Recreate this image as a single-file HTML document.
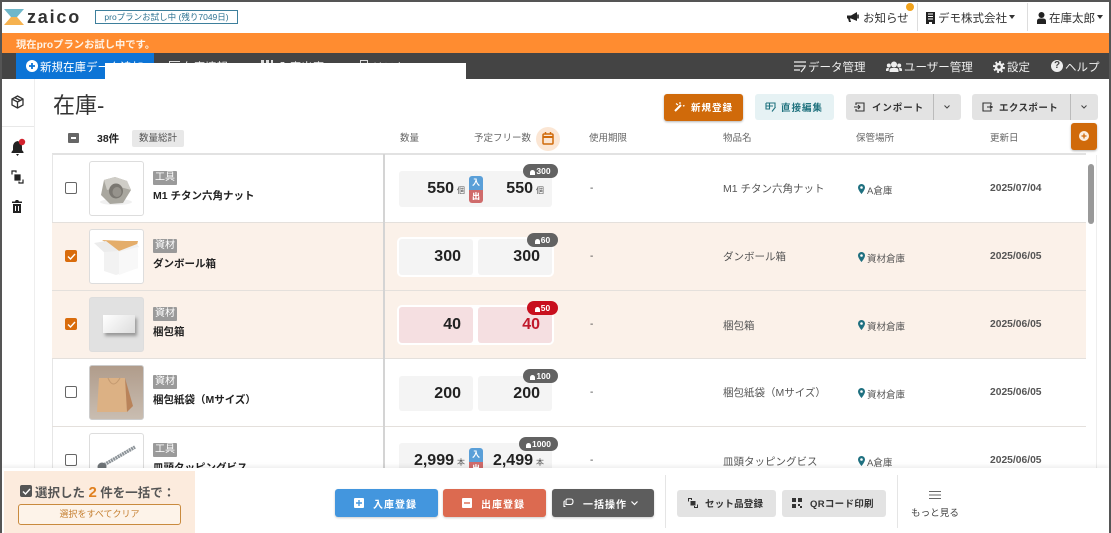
<!DOCTYPE html>
<html lang="ja"><head><meta charset="utf-8">
<style>
*{box-sizing:border-box;margin:0;padding:0}
html,body{width:1111px;height:533px;overflow:hidden;background:#fff}
body{font-family:"Liberation Sans","Noto Sans CJK JP",sans-serif;color:#222;position:relative}
.a{position:absolute;white-space:nowrap}
svg.a{display:block}
.row{position:absolute;left:52px;width:1034px;height:68px;border-bottom:1px solid #e4e0dc}
.sel{background:#fbf1e9}
.cb{position:absolute;left:65px;width:12px;height:12px;border:1.5px solid #666;border-radius:2px;background:#fff}
.cb.on{background:#d96c0c;border:0}
.thumb{position:absolute;left:89px;width:55px;height:55px;border:1px solid #ddd;border-radius:3px;background:#fff;overflow:hidden}
.tag{position:absolute;left:153px;width:24px;height:14px;background:#9a9a9a;color:#fff;font-size:10px;line-height:14px;text-align:center;border-radius:1px}
.nm{position:absolute;left:153px;font-size:10.500px;font-weight:bold;white-space:nowrap;color:#222}
.qbox{position:absolute;width:74px;height:36px;background:#f4f4f4;border-radius:3px}
.wrap{position:absolute;left:397px;width:157px;height:40px;background:#fff;border-radius:5px}
.num{position:absolute;font-size:16px;font-weight:bold;text-align:right;white-space:nowrap;color:#222}
.u{font-size:8px;font-weight:normal;color:#555;margin-left:3px}
.pill{position:absolute;height:14px;background:#626262;color:#fff;font-size:8.500px;font-weight:bold;line-height:14px;text-align:center;border-radius:7px}
.pill s{display:inline-block;width:5px;height:5px;background:#fff;border-radius:3px 3px 0 0;margin-right:1px;vertical-align:-0.500px}
.io{position:absolute;left:469px;width:14px;height:27px;border-radius:3px;overflow:hidden;font-size:8px;line-height:13.500px;text-align:center;color:#fff;font-weight:bold}
.io i{display:block;height:13.500px;font-style:normal;background:#5a9fd8}
.io b{display:block;height:13.500px;background:#cf6b6b}
.dash{position:absolute;left:590px;font-size:10px;color:#444}
.pn{position:absolute;left:723px;font-size:10.500px;color:#555;white-space:nowrap}
.loc{position:absolute;left:867px;font-size:9.500px;color:#555;white-space:nowrap}
.date{position:absolute;left:990px;font-size:10.300px;font-weight:bold;color:#555;white-space:nowrap}
.th{position:absolute;top:130px;font-size:9.500px;color:#666;white-space:nowrap}
.b{position:absolute;border-radius:3px}
.t{position:absolute;font-size:10px;font-weight:bold;white-space:nowrap;letter-spacing:1px}
.nav{position:absolute;top:59px;color:#eee;font-size:11.500px;white-space:nowrap}
.top{position:absolute;top:10px;font-size:11.500px;color:#333;white-space:nowrap}
</style></head><body>

<!-- header -->
<svg class="a" style="left:4px;top:9px" width="20" height="16" viewBox="0 0 20 16"><path d="M0 0H20L13 8H7Z" fill="#6fb7c9"/><path d="M7 8H13L20 16H0Z" fill="#f6b24f"/></svg>
<div class="a" style="left:27px;top:5px;font-size:18px;font-weight:bold;letter-spacing:1.800px;color:#333;line-height:24px">zaico</div>
<div class="a" style="left:95px;top:10px;width:143px;height:14px;border:1px solid #3d7f9c;font-size:8.500px;line-height:12px;text-align:center;color:#2e7392">proプランお試し中 (残り7049日)</div>

<svg class="a" style="left:847px;top:12px" width="13" height="11" viewBox="0 0 13 11"><path d="M0 3.500H4L10 0V9L4 6.500H3L4 10H2L1 6.500H0Z" fill="#222"/><path d="M11 2.500V6.500" stroke="#222" stroke-width="1.600"/></svg>
<div class="top" style="left:863px">お知らせ</div>
<div class="a" style="left:906px;top:3px;width:8px;height:8px;border-radius:50%;background:#f2a31c"></div>
<div class="a" style="left:917px;top:3px;width:1px;height:28px;background:#ddd"></div>
<svg class="a" style="left:926px;top:12px" width="9" height="12" viewBox="0 0 9 12"><path d="M0 0H9V12H6V10H3V12H0Z" fill="#222"/><path d="M2 2H7M2 4.500H7M2 7H7" stroke="#fff" stroke-width="1"/></svg>
<div class="top" style="left:938px">デモ株式会社</div>
<div class="a" style="left:1009px;top:15px;border:3.500px solid transparent;border-top:4px solid #333"></div>
<div class="a" style="left:1027px;top:3px;width:1px;height:28px;background:#ddd"></div>
<svg class="a" style="left:1037px;top:12px" width="9" height="12" viewBox="0 0 9 12"><circle cx="4.500" cy="3" r="3" fill="#222"/><path d="M0 12V9Q0 6.500 3 6.500H6Q9 6.500 9 9V12Z" fill="#222"/></svg>
<div class="top" style="left:1049px">在庫太郎</div>
<div class="a" style="left:1097px;top:15px;border:3.500px solid transparent;border-top:4px solid #333"></div>

<!-- orange bar -->
<div class="a" style="left:2px;top:33px;width:1107px;height:20px;background:#ff8c30"></div>
<div class="a" style="left:16px;top:36px;font-size:10.300px;font-weight:bold;color:#fff3e6">現在proプランお試し中です。</div>

<!-- nav -->
<div class="a" style="left:2px;top:53px;width:1107px;height:26px;background:#444"></div>
<div class="a" style="left:16px;top:53px;width:138px;height:26px;background:#0c74d6"></div>
<svg class="a" style="left:26px;top:60px" width="12" height="12" viewBox="0 0 12 12"><circle cx="6" cy="6" r="6" fill="#fff"/><path d="M6 3V9M3 6H9" stroke="#0c74d6" stroke-width="1.800"/></svg>
<div class="nav" style="left:40px;color:#fff">新規在庫データ追加</div>
<div class="a" style="left:169px;top:61px;width:11px;height:8px;border:1px solid #ddd;border-right:0"></div>
<div class="nav" style="left:182px">在庫情報</div>
<svg class="a" style="left:260px;top:60px" width="14" height="10" viewBox="0 0 14 10" fill="#ddd"><path d="M1 0H4V10H1ZM6 0H9V10H6ZM11 0H13V10H11Z"/></svg>
<div class="nav" style="left:278px">入庫出庫</div>
<div class="a" style="left:360px;top:60px;width:8px;height:9px;border:1.500px solid #ddd"></div>
<div class="nav" style="left:372px">リスト</div>
<div class="a" style="left:105px;top:63px;width:361px;height:17px;background:#fff"></div>

<svg class="a" style="left:794px;top:60px" width="12" height="13" viewBox="0 0 12 13" fill="none" stroke="#eee" stroke-width="1.200"><path d="M0 2H12M0 6H12M0 10H6M11 7L7 12"/></svg>
<div class="nav" style="left:808px">データ管理</div>
<svg class="a" style="left:886px;top:61px" width="16" height="12" viewBox="0 0 16 12" fill="#eee"><circle cx="8" cy="3.500" r="3"/><circle cx="2.800" cy="4.500" r="2"/><circle cx="13.200" cy="4.500" r="2"/><path d="M3.500 11V9.500Q3.500 7 6 7H10Q12.500 7 12.500 9.500V11ZM0 10V8.500Q0 7 2 7H3L2.500 10ZM16 10V8.500Q16 7 14 7H13L13.500 10Z"/></svg>
<div class="nav" style="left:904px">ユーザー管理</div>
<svg class="a" style="left:993px;top:61px" width="12" height="12" viewBox="0 0 12 12"><circle cx="6" cy="6" r="4.200" fill="#eee"/><circle cx="6" cy="6" r="5" fill="none" stroke="#eee" stroke-width="2" stroke-dasharray="2 1.900"/><circle cx="6" cy="6" r="1.700" fill="#444"/></svg>
<div class="nav" style="left:1007px">設定</div>
<div class="a" style="left:1051px;top:60px;width:12px;height:12px;border-radius:50%;background:#eee;color:#444;font-size:10px;line-height:12px;text-align:center;font-weight:bold">?</div>
<div class="nav" style="left:1065px">ヘルプ</div>

<!-- sidebar -->
<div class="a" style="left:34px;top:79px;width:1px;height:400px;background:#eee"></div>
<div class="a" style="left:2px;top:126px;width:32px;height:1px;background:#e8e8e8"></div>
<svg class="a" style="left:11px;top:95px" width="13" height="14" viewBox="0 0 13 14" fill="none" stroke="#333" stroke-width="1.300"><path d="M6.500 1L12 4V10L6.500 13L1 10V4ZM1 4L6.500 7L12 4M6.500 7V13M3.500 2.500L9.500 5.500"/></svg>
<svg class="a" style="left:11px;top:138px" width="15" height="18" viewBox="0 0 15 18"><path d="M6.500 3Q2 4 2 9V12L0.500 14V15H12.500V14L11 12V9Q11 4 6.500 3ZM5 16H8L6.500 18Z" fill="#222"/><circle cx="11" cy="4" r="3.200" fill="#d3232e"/></svg>
<svg class="a" style="left:11px;top:170px" width="13" height="14" viewBox="0 0 13 14" fill="none" stroke="#222" stroke-width="1.200"><path d="M1 4.500V1H5V2.500M12 9.500V13H8V11.500"/><path d="M4 5H9V10H4Z" fill="#222"/></svg>
<svg class="a" style="left:12px;top:200px" width="10" height="13" viewBox="0 0 10 13" fill="#222"><path d="M0 1.500H3L3.800 0H6.200L7 1.500H10V3H0ZM1 4H9V13H1Z"/><path d="M3.500 6V11M6.500 6V11" stroke="#fff" stroke-width="1"/></svg>

<!-- page head -->
<div class="a" style="left:53px;top:92px;font-size:22px;color:#333;line-height:28px">在庫-</div>

<div class="b" style="left:664px;top:94px;width:79px;height:27px;background:#d06a0a;box-shadow:0 1px 2px rgba(0,0,0,.3)"></div>
<svg class="a" style="left:674px;top:101px" width="11" height="11" viewBox="0 0 11 11" fill="none" stroke="#fff"><path d="M1 10L7 4" stroke-width="2"/><path d="M2 2.500L4 4M6 1V3M9 5L10.500 4.500" stroke-width="1.200"/></svg>
<div class="t" style="left:691px;top:100px;color:#fff;font-size:9.500px">新規登録</div>

<div class="b" style="left:755px;top:94px;width:79px;height:26px;background:#e6f2f4"></div>
<svg class="a" style="left:765px;top:102px" width="11" height="10" viewBox="0 0 11 10" fill="none" stroke="#21737f" stroke-width="1.100"><path d="M1 1H10V5M1 1V7H5M1 4H8M4.500 1V7M10.500 5L7 9.500"/></svg>
<div class="t" style="left:781px;top:100px;color:#21737f;font-size:9.500px">直接編集</div>

<div class="b" style="left:846px;top:94px;width:115px;height:26px;background:#e3e3e3"></div>
<svg class="a" style="left:854px;top:102px" width="11" height="10" viewBox="0 0 11 10" fill="none" stroke="#333" stroke-width="1.100"><path d="M2 3V1H10V9H2V7M0 5H6M4 3L6 5L4 7"/></svg>
<div class="t" style="left:872px;top:100px;color:#333;font-size:9.500px;letter-spacing:.9px">インポート</div>
<div class="a" style="left:933px;top:94px;width:1px;height:26px;background:#bbb"></div>
<svg class="a" style="left:944px;top:105px" width="6" height="4" viewBox="0 0 6 4" fill="none" stroke="#444" stroke-width="1"><path d="M0.500 0.500L3 3L5.500 0.500"/></svg>

<div class="b" style="left:972px;top:94px;width:126px;height:26px;background:#e3e3e3"></div>
<svg class="a" style="left:982px;top:102px" width="11" height="10" viewBox="0 0 11 10" fill="none" stroke="#333" stroke-width="1.100"><path d="M9 3V1H1V9H9V7M5 5H11M8 3.500L10 5L8 6.500"/></svg>
<div class="t" style="left:999px;top:100px;color:#333;font-size:9.500px;letter-spacing:.4px">エクスポート</div>
<div class="a" style="left:1070px;top:94px;width:1px;height:26px;background:#bbb"></div>
<svg class="a" style="left:1081px;top:105px" width="6" height="4" viewBox="0 0 6 4" fill="none" stroke="#444" stroke-width="1"><path d="M0.500 0.500L3 3L5.500 0.500"/></svg>

<!-- table head -->
<div class="a" style="left:68px;top:133px;width:11px;height:10px;background:#666;border-radius:1px"></div>
<div class="a" style="left:71px;top:137px;width:5px;height:2px;background:#fff"></div>
<div class="a" style="left:97px;top:131px;font-size:10.500px;font-weight:bold;color:#222">38件</div>
<div class="a" style="left:132px;top:130px;width:52px;height:17px;background:#e8e8e8;border-radius:2px;font-size:9.500px;line-height:17px;text-align:center;color:#555">数量総計</div>
<div class="th" style="left:400px">数量</div>
<div class="th" style="left:474px">予定フリー数</div>
<div class="a" style="left:536px;top:127px;width:24px;height:24px;border-radius:50%;background:#fbe6d4"></div>
<svg class="a" style="left:542px;top:132px" width="12" height="13" viewBox="0 0 12 13" fill="none" stroke="#d06a0a" stroke-width="1.500"><rect x="1" y="2" width="10" height="10" rx="1"/><path d="M1 5H11" stroke-width="2"/><path d="M3.500 0V2M8.500 0V2"/></svg>
<div class="th" style="left:589px">使用期限</div>
<div class="th" style="left:723px">物品名</div>
<div class="th" style="left:856px">保管場所</div>
<div class="th" style="left:990px">更新日</div>
<div class="a" style="left:1071px;top:123px;width:26px;height:27px;background:#d06a0a;border-radius:3px;box-shadow:0 1px 2px rgba(0,0,0,.3)"></div>
<svg class="a" style="left:1079px;top:131px" width="10" height="10" viewBox="0 0 10 10"><circle cx="5" cy="5" r="5" fill="#fbeee0"/><path d="M5 2.500V7.500M2.500 5H7.500" stroke="#d06a0a" stroke-width="1.300"/></svg>

<!-- rows -->
<div class="a" style="left:52px;top:153px;width:1034px;height:2px;background:#e2e2e2"></div>
<div class="a" style="left:52px;top:154px;width:1px;height:320px;background:#e6e6e6"></div>
<div class="row" style="top:155px"></div>
<div class="row sel" style="top:223px"></div>
<div class="row sel" style="top:291px"></div>
<div class="row" style="top:359px"></div>
<div class="a" style="left:383px;top:154px;width:2px;height:320px;background:#d4d4d4"></div>

<!-- row 1 -->
<div class="cb" style="top:182px"></div>
<div class="thumb" style="top:161px"><svg width="53" height="53" viewBox="0 0 53 53"><ellipse cx="26" cy="40" rx="16" ry="3" fill="#f0f0f0"/><path d="M14 18L25 15L37 19L41 28L33 41L20 42L11 33Z" fill="#a9a79f"/><path d="M14 18L25 15L37 19L41 28L30 25L17 28Z" fill="#cfcdc7"/><ellipse cx="26" cy="29" rx="7" ry="7.500" fill="#7b7872"/><ellipse cx="27" cy="30" rx="4.500" ry="5" fill="#96938c"/></svg></div>
<div class="tag" style="top:171px">工具</div>
<div class="nm" style="top:188px">M1 チタン六角ナット</div>
<div class="a" style="left:399px;top:171px;width:153px;height:36px;background:#f4f4f4;border-radius:3px"></div>
<div class="num" style="left:401px;top:180px;width:64px">550<span class="u">個</span></div>
<div class="num" style="left:478px;top:180px;width:66px">550<span class="u">個</span></div>
<div class="io" style="top:176px"><i>入</i><b>出</b></div>
<div class="pill" style="left:523px;top:164px;width:35px"><s></s>300</div>
<div class="dash" style="top:183px">-</div>
<div class="pn" style="top:181px">M1 チタン六角ナット</div>
<svg class="a" style="left:858px;top:184px" width="7" height="10" viewBox="0 0 7 10"><path d="M3.500 0A3.500 3.500 0 0 1 7 3.500C7 6 3.500 10 3.500 10S0 6 0 3.500A3.500 3.500 0 0 1 3.500 0Z" fill="#1f7080"/><circle cx="3.500" cy="3.500" r="1.300" fill="#fff"/></svg>
<div class="loc" style="top:183px">A倉庫</div>
<div class="date" style="top:183px">2025/07/04</div>

<!-- row 2 -->
<div class="cb on" style="top:250px"></div>
<svg class="a" style="left:67px;top:253px" width="9" height="7" viewBox="0 0 9 7" fill="none" stroke="#fff" stroke-width="1.400"><path d="M1 3.500L3.500 6L8 1"/></svg>
<div class="thumb" style="top:229px"><svg width="53" height="53" viewBox="0 0 53 53"><path d="M12 10L36 11L48 11L47 15L37 19L29 21Z" fill="#e4ad6a"/><path d="M4 13L16 11L29 21L17 25Z" fill="#ececec"/><path d="M29 21L47 14L49 17L36 24Z" fill="#f0f0f0"/><path d="M14 22L29 21L48 17V38L26 45L14 41Z" fill="#f2f2f2"/><path d="M29 22L48 17V38L29 45Z" fill="#f8f8f8"/></svg></div>
<div class="tag" style="top:239px">資材</div>
<div class="nm" style="top:256px">ダンボール箱</div>
<div class="wrap" style="top:237px"></div>
<div class="qbox" style="left:399px;top:239px"></div><div class="qbox" style="left:478px;top:239px"></div>
<div class="num" style="left:399px;top:248px;width:62px">300</div>
<div class="num" style="left:478px;top:248px;width:62px">300</div>
<div class="pill" style="left:527px;top:233px;width:31px"><s></s>60</div>
<div class="dash" style="top:251px">-</div>
<div class="pn" style="top:249px">ダンボール箱</div>
<svg class="a" style="left:858px;top:252px" width="7" height="10" viewBox="0 0 7 10"><path d="M3.500 0A3.500 3.500 0 0 1 7 3.500C7 6 3.500 10 3.500 10S0 6 0 3.500A3.500 3.500 0 0 1 3.500 0Z" fill="#1f7080"/><circle cx="3.500" cy="3.500" r="1.300" fill="#fff"/></svg>
<div class="loc" style="top:251px">資材倉庫</div>
<div class="date" style="top:251px">2025/06/05</div>

<!-- row 3 -->
<div class="cb on" style="top:318px"></div>
<svg class="a" style="left:67px;top:321px" width="9" height="7" viewBox="0 0 9 7" fill="none" stroke="#fff" stroke-width="1.400"><path d="M1 3.500L3.500 6L8 1"/></svg>
<div class="thumb" style="top:297px;background:#e1e1e1"><div class="a" style="left:13px;top:17px;width:32px;height:18px;background:linear-gradient(135deg,#fff,#ddd);box-shadow:2px 3px 3px #999"></div></div>
<div class="tag" style="top:307px">資材</div>
<div class="nm" style="top:324px">梱包箱</div>
<div class="wrap" style="top:305px"></div>
<div class="qbox" style="left:399px;top:307px;background:#f5dfe1"></div><div class="qbox" style="left:478px;top:307px;background:#f5dfe1"></div>
<div class="num" style="left:399px;top:316px;width:62px">40</div>
<div class="num" style="left:478px;top:316px;width:62px;color:#c0192c">40</div>
<div class="pill" style="left:527px;top:301px;width:31px;background:#c80f1e"><s></s>50</div>
<div class="dash" style="top:319px">-</div>
<div class="pn" style="top:318px">梱包箱</div>
<svg class="a" style="left:858px;top:320px" width="7" height="10" viewBox="0 0 7 10"><path d="M3.500 0A3.500 3.500 0 0 1 7 3.500C7 6 3.500 10 3.500 10S0 6 0 3.500A3.500 3.500 0 0 1 3.500 0Z" fill="#1f7080"/><circle cx="3.500" cy="3.500" r="1.300" fill="#fff"/></svg>
<div class="loc" style="top:319px">資材倉庫</div>
<div class="date" style="top:319px">2025/06/05</div>

<!-- row 4 -->
<div class="cb" style="top:386px"></div>
<div class="thumb" style="top:365px;background:linear-gradient(#b09c8b,#c9bdb1);border-color:#ccc"><svg width="53" height="53" viewBox="0 0 53 53"><path d="M9 12H35L37 46H7Z" fill="#dcb184"/><path d="M35 12L43 40L37 46Z" fill="#b9835a"/><path d="M18 12Q23 24 30 12" fill="none" stroke="#c49a70" stroke-width="1"/></svg></div>
<div class="tag" style="top:375px">資材</div>
<div class="nm" style="top:392px">梱包紙袋（Mサイズ）</div>
<div class="qbox" style="left:399px;top:376px;height:35px"></div><div class="qbox" style="left:478px;top:376px;height:35px"></div>
<div class="num" style="left:399px;top:385px;width:62px">200</div>
<div class="num" style="left:478px;top:385px;width:62px">200</div>
<div class="pill" style="left:523px;top:369px;width:35px"><s></s>100</div>
<div class="dash" style="top:387px">-</div>
<div class="pn" style="top:385px">梱包紙袋（Mサイズ）</div>
<svg class="a" style="left:858px;top:388px" width="7" height="10" viewBox="0 0 7 10"><path d="M3.500 0A3.500 3.500 0 0 1 7 3.500C7 6 3.500 10 3.500 10S0 6 0 3.500A3.500 3.500 0 0 1 3.500 0Z" fill="#1f7080"/><circle cx="3.500" cy="3.500" r="1.300" fill="#fff"/></svg>
<div class="loc" style="top:387px">資材倉庫</div>
<div class="date" style="top:387px">2025/06/05</div>

<!-- row 5 -->
<div class="cb" style="top:454px"></div>
<div class="thumb" style="top:433px"><svg width="53" height="53" viewBox="0 0 53 53"><path d="M12 32L45 13" stroke="#8d9499" stroke-width="3.500" stroke-dasharray="2 .6"/><circle cx="12" cy="33" r="4.500" fill="#6f7478"/></svg></div>
<div class="tag" style="top:443px">工具</div>
<div class="nm" style="top:460px">皿頭タッピングビス</div>
<div class="a" style="left:399px;top:443px;width:153px;height:36px;background:#f4f4f4;border-radius:3px"></div>
<div class="num" style="left:401px;top:452px;width:64px">2,999<span class="u">本</span></div>
<div class="num" style="left:478px;top:452px;width:66px">2,499<span class="u">本</span></div>
<div class="io" style="top:448px"><i>入</i><b>出</b></div>
<div class="pill" style="left:519px;top:437px;width:39px"><s></s>1000</div>
<div class="dash" style="top:455px">-</div>
<div class="pn" style="top:454px">皿頭タッピングビス</div>
<svg class="a" style="left:858px;top:456px" width="7" height="10" viewBox="0 0 7 10"><path d="M3.500 0A3.500 3.500 0 0 1 7 3.500C7 6 3.500 10 3.500 10S0 6 0 3.500A3.500 3.500 0 0 1 3.500 0Z" fill="#1f7080"/><circle cx="3.500" cy="3.500" r="1.300" fill="#fff"/></svg>
<div class="loc" style="top:455px">A倉庫</div>
<div class="date" style="top:455px">2025/06/05</div>

<!-- scrollbar -->
<div class="a" style="left:1087px;top:155px;width:10px;height:315px;background:#fff;border-right:1px solid #eee"></div>
<div class="a" style="left:1088px;top:164px;width:6px;height:60px;background:#999;border-radius:3px"></div>

<!-- footer -->
<div class="a" style="left:2px;top:468px;width:1107px;height:65px;background:#fff;box-shadow:0 -2px 4px rgba(0,0,0,.07)"></div>
<div class="a" style="left:4px;top:471px;width:191px;height:62px;background:#fcebdd"></div>
<div class="a" style="left:20px;top:485px;width:12px;height:12px;background:#555;border-radius:2px"></div>
<svg class="a" style="left:22px;top:488px" width="9" height="7" viewBox="0 0 9 7" fill="none" stroke="#fff" stroke-width="1.400"><path d="M1 3.500L3.500 6L8 1"/></svg>
<div class="a" style="left:35px;top:482px;font-size:12.500px;font-weight:bold;color:#555">選択した <span style="color:#e0801f;font-size:15px">2</span> 件を一括で：</div>
<div class="a" style="left:18px;top:504px;width:163px;height:21px;border:1px solid #c98a3e;border-radius:3px;background:#fdf3e9;font-size:9px;line-height:19px;text-align:center;color:#c57f30">選択をすべてクリア</div>

<div class="b" style="left:335px;top:489px;width:103px;height:28px;background:#4396de;box-shadow:0 1px 2px rgba(0,0,0,.2)"></div>
<svg class="a" style="left:354px;top:498px" width="10" height="10" viewBox="0 0 10 10"><rect width="10" height="10" rx="1" fill="#fff"/><path d="M5 2V8M2 5H8" stroke="#4396de" stroke-width="1.400"/></svg>
<div class="t" style="left:373px;top:496px;color:#fff">入庫登録</div>

<div class="b" style="left:443px;top:489px;width:103px;height:28px;background:#dc6a50;box-shadow:0 1px 2px rgba(0,0,0,.2)"></div>
<svg class="a" style="left:462px;top:498px" width="10" height="10" viewBox="0 0 10 10"><rect width="10" height="10" rx="1" fill="#fff"/><path d="M2 5H8" stroke="#dc6a50" stroke-width="1.400"/></svg>
<div class="t" style="left:481px;top:496px;color:#fff">出庫登録</div>

<div class="b" style="left:552px;top:489px;width:102px;height:28px;background:#5d5d5d;box-shadow:0 1px 2px rgba(0,0,0,.2)"></div>
<svg class="a" style="left:563px;top:498px" width="11" height="10" viewBox="0 0 11 10" fill="none" stroke="#fff" stroke-width="1.100"><path d="M2.500 8.500H1V4Q1 3 2 3M3 6.500V2.500Q3 1 4.500 1H8Q10 1 10 3.500T8 6.500Z"/></svg>
<div class="t" style="left:583px;top:496px;color:#fff">一括操作</div>
<svg class="a" style="left:631px;top:501px" width="7" height="5" viewBox="0 0 7 5" fill="none" stroke="#fff" stroke-width="1.200"><path d="M0.500 0.500L3.500 3.500L6.500 0.500"/></svg>

<div class="a" style="left:665px;top:475px;width:1px;height:53px;background:#e5e5e5"></div>

<div class="b" style="left:677px;top:490px;width:99px;height:27px;background:#e3e3e3"></div>
<svg class="a" style="left:688px;top:498px" width="10" height="10" viewBox="0 0 10 10" fill="none" stroke="#333" stroke-width="1"><path d="M.5 3.500V.5H3.500V2M9.500 6.500V9.500H6.500V8"/><path d="M3 3.500H7V7H3Z" fill="#333"/></svg>
<div class="t" style="left:705px;top:496px;color:#333;font-size:9.500px;letter-spacing:.2px">セット品登録</div>

<div class="b" style="left:782px;top:490px;width:104px;height:27px;background:#e3e3e3"></div>
<svg class="a" style="left:792px;top:498px" width="10" height="10" viewBox="0 0 10 10" fill="#333"><path d="M0 0H4V4H0ZM6 0H10V4H6ZM0 6H4V10H0ZM6 6H8V8H6ZM8 8H10V10H8Z"/></svg>
<div class="t" style="left:810px;top:496px;color:#333;font-size:9.500px;letter-spacing:.3px">QRコード印刷</div>

<div class="a" style="left:897px;top:475px;width:1px;height:53px;background:#e5e5e5"></div>
<svg class="a" style="left:929px;top:491px" width="12" height="8" viewBox="0 0 12 8" stroke="#666" stroke-width="1"><path d="M0 .5H12M0 4H12M0 7.500H12"/></svg>
<div class="a" style="left:911px;top:505px;font-size:9.600px;color:#444">もっと見る</div>

<!-- frame -->
<div class="a" style="left:0;top:0;width:1111px;height:2px;background:#555"></div>
<div class="a" style="left:0;top:0;width:2px;height:533px;background:#555"></div>
<div class="a" style="left:1109px;top:0;width:2px;height:533px;background:#555"></div>
</body></html>
